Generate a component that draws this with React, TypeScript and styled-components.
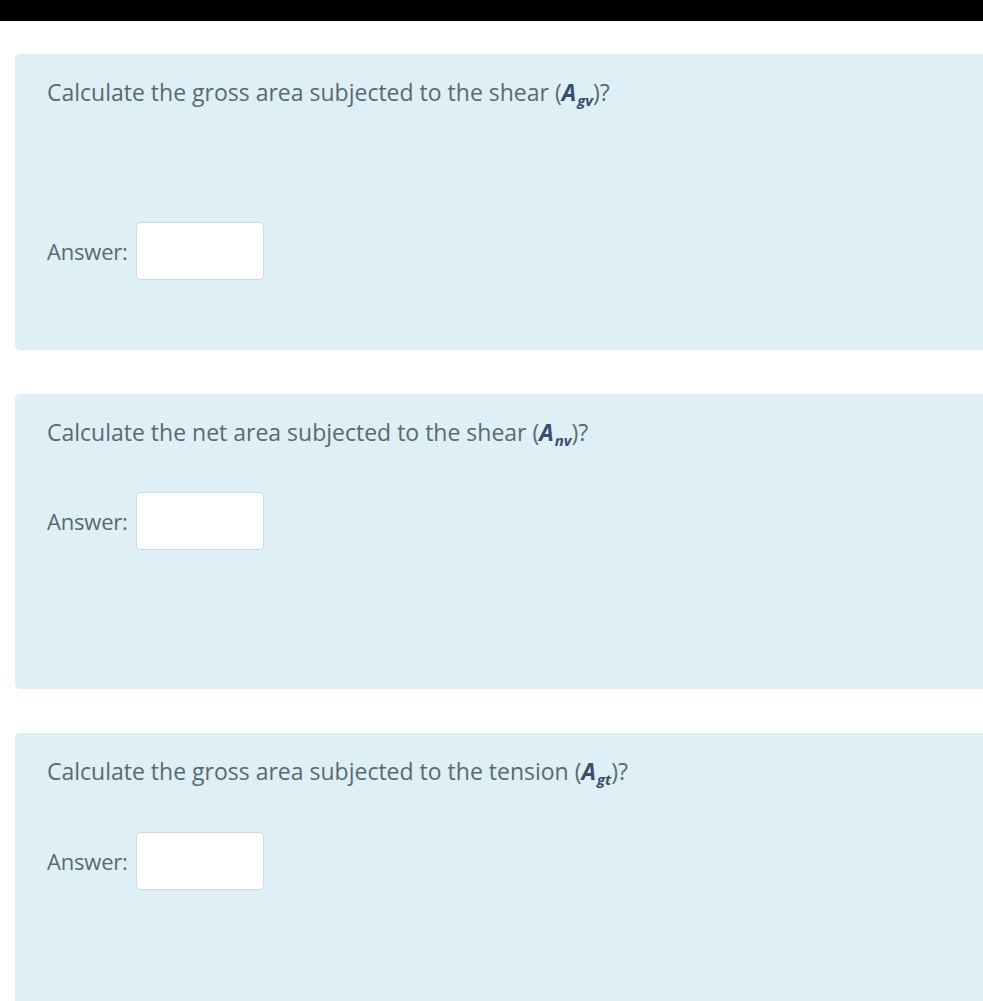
import styled, { createGlobalStyle } from 'styled-components';

const GlobalStyle = createGlobalStyle`
  html, body {
    margin: 0;
    padding: 0;
    background: #ffffff;
  }
  body {
    font-family: 'Open Sans', 'Noto Sans', sans-serif;
  }
`;

const Page = styled.div`
  width: 983px;
  height: 1001px;
  overflow: hidden;
  background: #ffffff;
`;

const TopBar = styled.div`
  height: 21px;
  background: #000000;
`;

const List = styled.div`
  display: flex;
  flex-direction: column;
  gap: 44px;
  padding: 33px 0 0 15px;
`;

const Card = styled.div<{ $height: number }>`
  height: ${({ $height }) => $height}px;
  box-sizing: border-box;
  background: #def0f6;
  border-radius: 5px 0 0 5px;
  padding: 24px 32px 0 32px;
  color: #5b696f;
`;

const Question = styled.div<{ $gap: number }>`
  font-size: 23px;
  line-height: 28px;
  margin-bottom: ${({ $gap }) => $gap}px;
`;

const Sym = styled.span`
  font-weight: 700;
  font-style: italic;
  color: #3a4d6a;
`;

const Sub = styled.sub`
  font-size: 15px;
  vertical-align: -5px;
  line-height: 0;
  margin-left: 1px;
  letter-spacing: 0;
`;

const AnswerRow = styled.div`
  display: flex;
  align-items: center;
  gap: 8px;
  font-size: 22px;
  letter-spacing: -0.2px;
`;

const Input = styled.input`
  width: 128px;
  height: 58px;
  box-sizing: border-box;
  border: 1px solid #cfd8dc;
  border-radius: 4px;
  background: #ffffff;
`;

const questions = [
  { text: 'Calculate the gross area subjected to the shear (', sym: 'A', sub: 'gv', height: 296, gap: 116 },
  { text: 'Calculate the net area subjected to the shear (', sym: 'A', sub: 'nv', height: 295, gap: 46 },
  { text: 'Calculate the gross area subjected to the tension (', sym: 'A', sub: 'gt', height: 300, gap: 47 },
];

export default function App() {
  return (
    <Page>
      <GlobalStyle />
      <TopBar />
      <List>
        {questions.map((q, i) => (
          <Card key={i} $height={q.height}>
            <Question $gap={q.gap}>
              {q.text}
              <Sym>
                {q.sym}
                <Sub>{q.sub}</Sub>
              </Sym>
              )?
            </Question>
            <AnswerRow>
              <span>Answer:</span>
              <Input type="text" />
            </AnswerRow>
          </Card>
        ))}
      </List>
    </Page>
  );
}
